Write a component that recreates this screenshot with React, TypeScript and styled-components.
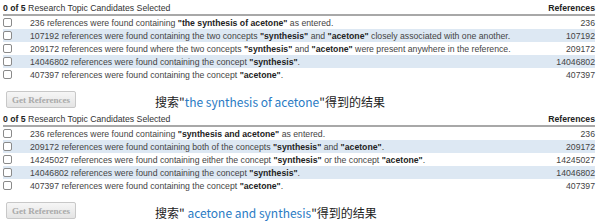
import React from 'react';
import styled, { createGlobalStyle } from 'styled-components';

const GlobalStyle = createGlobalStyle`
body {
  margin: 0;
  background: #ffffff;
  font-family: "Liberation Sans", Arial, sans-serif;
}
`;

type Part = { text: string; bold?: boolean };
type Row = { parts: Part[]; count: string };

const first: Row[] = [
  { parts: [{ text: '236 references were found containing ' }, { text: '"the synthesis of acetone"', bold: true }, { text: ' as entered.' }], count: '236' },
  { parts: [{ text: '107192 references were found containing the two concepts ' }, { text: '"synthesis"', bold: true }, { text: ' and ' }, { text: '"acetone"', bold: true }, { text: ' closely associated with one another.' }], count: '107192' },
  { parts: [{ text: '209172 references were found where the two concepts ' }, { text: '"synthesis"', bold: true }, { text: ' and ' }, { text: '"acetone"', bold: true }, { text: ' were present anywhere in the reference.' }], count: '209172' },
  { parts: [{ text: '14046802 references were found containing the concept ' }, { text: '"synthesis"', bold: true }, { text: '.' }], count: '14046802' },
  { parts: [{ text: '407397 references were found containing the concept ' }, { text: '"acetone"', bold: true }, { text: '.' }], count: '407397' },
];

const second: Row[] = [
  { parts: [{ text: '236 references were found containing ' }, { text: '"synthesis and acetone"', bold: true }, { text: ' as entered.' }], count: '236' },
  { parts: [{ text: '209172 references were found containing both of the concepts ' }, { text: '"synthesis"', bold: true }, { text: ' and ' }, { text: '"acetone"', bold: true }, { text: '.' }], count: '209172' },
  { parts: [{ text: '14245027 references were found containing either the concept ' }, { text: '"synthesis"', bold: true }, { text: ' or the concept ' }, { text: '"acetone"', bold: true }, { text: '.' }], count: '14245027' },
  { parts: [{ text: '14046802 references were found containing the concept ' }, { text: '"synthesis"', bold: true }, { text: '.' }], count: '14046802' },
  { parts: [{ text: '407397 references were found containing the concept ' }, { text: '"acetone"', bold: true }, { text: '.' }], count: '407397' },
];

const Section = styled.div`
  height: 111px;
  padding: 0 5px 0 3px;
  box-sizing: border-box;
`;

const Header = styled.div`
  display: flex;
  justify-content: space-between;
  align-items: flex-end;
  height: 14px;
  border-bottom: 2px solid #a8a8a8;
  font-size: 8.7px;
  color: #333;
  line-height: 11px;
`;

const Strong = styled.b`
  color: #222;
`;

const Rows = styled.div`
  display: flex;
  flex-direction: column;
`;

const RowLine = styled.div<{ $alt: boolean }>`
  display: flex;
  align-items: center;
  height: 13px;
  background: ${p => (p.$alt ? '#dde8f3' : '#ffffff')};
  font-size: 8.7px;
  color: #444;
`;

const Check = styled.span`
  width: 9px;
  height: 9px;
  border: 1px solid #8a8a8a;
  border-radius: 2px;
  background: #fff;
  box-sizing: border-box;
  margin-right: 18px;
  flex: none;
`;

const Label = styled.span`
  flex: 1;
  white-space: nowrap;
  b {
    color: #222;
  }
`;

const Count = styled.span`
  text-align: right;
`;

const Footer = styled.div`
  display: flex;
  align-items: center;
  margin-top: 8px;
`;

const Button = styled.div`
  width: 70px;
  height: 17px;
  margin-left: 3px;
  box-sizing: border-box;
  border: 1px solid #c8c8c8;
  border-radius: 2px;
  background: linear-gradient(#f6f6f6, #e4e4e4);
  color: #a9a9a9;
  font-family: "Liberation Serif", serif;
  font-weight: bold;
  font-size: 9px;
  white-space: nowrap;
  display: flex;
  align-items: center;
  justify-content: center;
`;

const Caption = styled.div`
  margin-left: 79px;
  margin-top: 4px;
  font-family: "Noto Sans CJK SC", "Noto Sans", sans-serif;
  font-size: 12px;
  color: #222;
  span {
    color: #2a7bc4;
  }
`;

const Panel: React.FC<{ rows: Row[]; query: string }> = ({ rows, query }) => (
  <Section>
    <Header>
      <span>
        <Strong>0 of 5</Strong> Research Topic Candidates Selected
      </span>
      <Strong>References</Strong>
    </Header>
    <Rows>
      {rows.map((r, i) => (
        <RowLine key={i} $alt={i % 2 === 1}>
          <Check />
          <Label>
            {r.parts.map((p, j) => (p.bold ? <b key={j}>{p.text}</b> : <React.Fragment key={j}>{p.text}</React.Fragment>))}
          </Label>
          <Count>{r.count}</Count>
        </RowLine>
      ))}
    </Rows>
    <Footer>
      <Button>Get References</Button>
      <Caption>
        搜索"<span>{query}</span>"得到的结果
      </Caption>
    </Footer>
  </Section>
);

const App: React.FC = () => (
  <>
    <GlobalStyle />
    <Panel rows={first} query="the synthesis of acetone" />
    <Panel rows={second} query=" acetone and synthesis" />
  </>
);

export default App;
